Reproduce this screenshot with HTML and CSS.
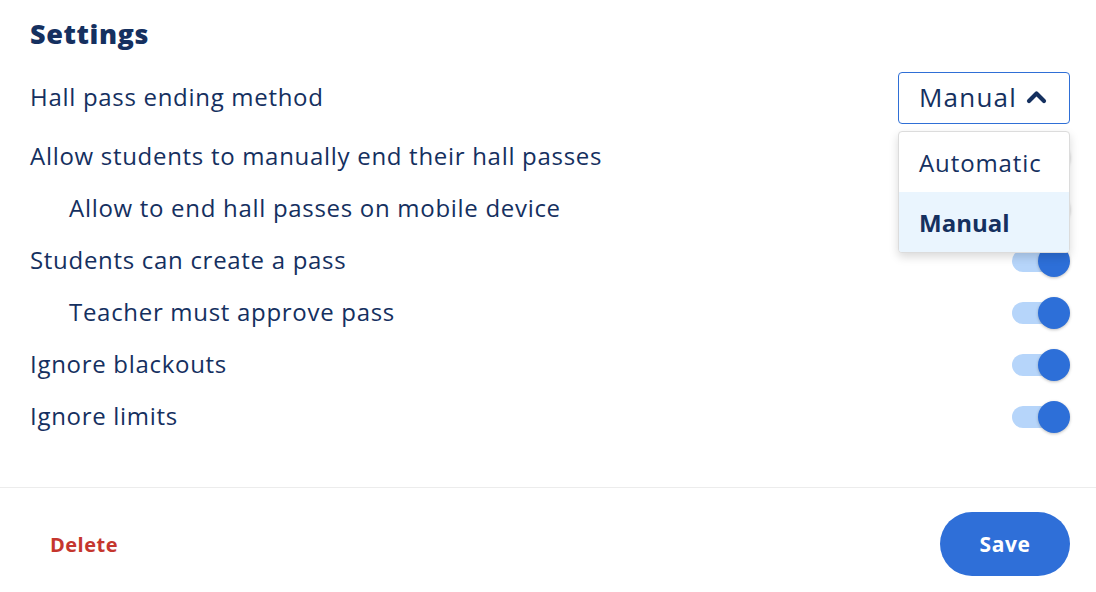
FILE: index.html
```html
<!DOCTYPE html>
<html lang="en">
<head>
<meta charset="utf-8">
<title>Settings</title>
<link rel="stylesheet" href="styles.css">
</head>
<body>
<div class="panel">
  <div class="content">
    <h2 class="title">Settings</h2>
    <div class="row first">
      <span class="label">Hall pass ending method</span>
      <div class="select-wrap">
        <div class="select">
          <span>Manual</span>
          <svg class="chev" width="21" height="14" viewBox="0 0 21 14"><polyline points="3,11 10.5,3.5 18,11" fill="none" stroke="#15305f" stroke-width="4.2" stroke-linecap="round" stroke-linejoin="round"/></svg>
        </div>
        <ul class="menu">
          <li class="opt">Automatic</li>
          <li class="opt active">Manual</li>
        </ul>
      </div>
    </div>
    <div class="row gap">
      <span class="label">Allow students to manually end their hall passes</span>
      <span class="toggle"><span class="knob"></span></span>
    </div>
    <div class="row">
      <span class="label sub">Allow to end hall passes on mobile device</span>
      <span class="toggle"><span class="knob"></span></span>
    </div>
    <div class="row">
      <span class="label">Students can create a pass</span>
      <span class="toggle"><span class="knob"></span></span>
    </div>
    <div class="row">
      <span class="label sub">Teacher must approve pass</span>
      <span class="toggle"><span class="knob"></span></span>
    </div>
    <div class="row">
      <span class="label">Ignore blackouts</span>
      <span class="toggle"><span class="knob"></span></span>
    </div>
    <div class="row">
      <span class="label">Ignore limits</span>
      <span class="toggle"><span class="knob"></span></span>
    </div>
  </div>
  <div class="footer">
    <button class="delete">Delete</button>
    <button class="save">Save</button>
  </div>
</div>
</body>
</html>
```
FILE: styles.css
```css
* { box-sizing: border-box; }
body {
  margin: 0;
  background: #fff;
  font-family: "Open Sans", "Noto Sans", sans-serif;
  color: #15305f;
}
.panel { width: 1096px; height: 592px; }
.content {
  padding: 16px 26px 44px 30px;
}
.title {
  margin: 0 0 20px;
  font-size: 27px;
  line-height: 36px;
  font-weight: 800;
  letter-spacing: 0.6px;
  color: #15305f;
}
.row {
  display: flex;
  align-items: center;
  justify-content: space-between;
  height: 52px;
}
.row.gap { margin-top: 7px; }
.label {
  font-size: 24px;
  line-height: 30px;
  letter-spacing: 0.7px;
  margin-top: -2px;
}
.label.sub { padding-left: 39px; }
.select-wrap { position: relative; }
.select {
  width: 172px;
  height: 52px;
  border: 1px solid #2f6fd6;
  border-radius: 4px;
  display: flex;
  align-items: center;
  padding-left: 20px;
  gap: 9px;
  font-size: 26px;
  letter-spacing: 1.2px;
}
.select span { margin-top: -2px; }
.chev { margin-top: -3px; }
.menu {
  position: absolute;
  top: 59px;
  left: 0;
  width: 172px;
  margin: 0;
  padding: 0;
  list-style: none;
  background: #fff;
  border: 1px solid #dcdcdc;
  border-radius: 4px;
  box-shadow: 0 4px 10px rgba(0,0,0,0.15);
  overflow: hidden;
  z-index: 2;
}
.opt {
  height: 60px;
  display: flex;
  align-items: center;
  padding-left: 20px;
  font-size: 24px;
  letter-spacing: 0.9px;
}
.opt.active {
  background: #eaf5fe;
  font-weight: 700;
  letter-spacing: 0;
}
.toggle {
  position: relative;
  width: 58px;
  height: 32px;
  display: block;
}
.toggle::before {
  content: "";
  position: absolute;
  left: 0;
  top: 5px;
  width: 48px;
  height: 22px;
  border-radius: 11px;
  background: #b6d5fa;
}
.knob {
  position: absolute;
  right: 0;
  top: 0;
  width: 32px;
  height: 32px;
  border-radius: 50%;
  background: #2d6fd8;
  box-shadow: 0 1px 3px rgba(0,0,0,0.25);
}
.footer {
  border-top: 1px solid #ececec;
  display: flex;
  align-items: center;
  justify-content: space-between;
  padding: 24px 26px 0 30px;
}
button { font-family: inherit; border: none; cursor: pointer; }
.delete {
  background: none;
  color: #c5362e;
  font-size: 20px;
  font-weight: 700;
  letter-spacing: 0.5px;
  padding: 0 20px;
}
.save {
  width: 130px;
  height: 64px;
  border-radius: 32px;
  background: #2f6fd8;
  color: #fff;
  font-size: 21px;
  font-weight: 700;
  letter-spacing: 0.6px;
}
```
